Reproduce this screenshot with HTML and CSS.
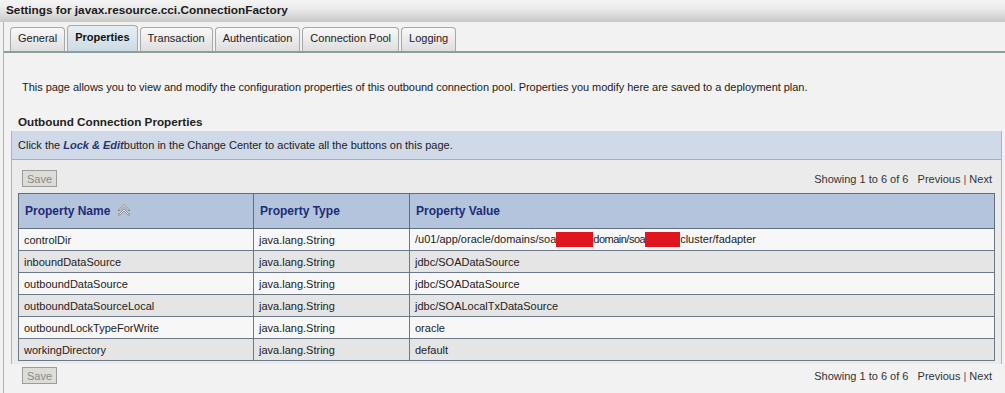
FILE: index.html
```html
<!doctype html>
<html lang="en">
<head>
    <meta charset="UTF-8">
    <title>Settings for javax.resource.cci.ConnectionFactory</title>
    <link rel="stylesheet" href="styles.css">
</head>
<body>
<div class="titlebar">Settings for javax.resource.cci.ConnectionFactory</div>
<div class="frame">
    <div class="tabs">
        <div class="tab">General</div>
        <div class="tab active">Properties</div>
        <div class="tab">Transaction</div>
        <div class="tab">Authentication</div>
        <div class="tab">Connection Pool</div>
        <div class="tab">Logging</div>
    </div>
    <p class="intro">This page allows you to view and modify the configuration properties of this outbound connection pool. Properties you modify here are saved to a deployment plan.</p>
    <h3 class="section">Outbound Connection Properties</h3>
    <div class="panel">
        <div class="notice">Click the <b><i>Lock &amp; Edit</i></b>button in the Change Center to activate all the buttons on this page.</div>
        <div class="controls">
            <button class="save" disabled>Save</button>
            <span class="pager">Showing 1 to 6 of 6 &nbsp; Previous <span class="sep">|</span> Next</span>
        </div>
        <table class="props">
            <tr>
                <th class="c1">Property Name
                    <svg class="sort" width="14" height="12" viewBox="0 0 14 12">
                        <path d="M1 6.5 L7 0.5 L13 6.5 L11 6.5 L7 2.5 L3 6.5 Z" fill="#f2f2f2" stroke="#8c8c8c" stroke-width="1"/>
                        <path d="M1 11 L7 5 L13 11 L11 11 L7 7 L3 11 Z" fill="#f2f2f2" stroke="#8c8c8c" stroke-width="1"/>
                    </svg>
                </th>
                <th class="c2">Property Type</th>
                <th>Property Value</th>
            </tr>
            <tr>
                <td>controlDir</td>
                <td>java.lang.String</td>
                <td>/u01/app/oracle/domains/soa<span class="mask"></span><span class="tight">domain/soa</span><span class="mask m2"></span>cluster/fadapter</td>
            </tr>
            <tr>
                <td>inboundDataSource</td>
                <td>java.lang.String</td>
                <td>jdbc/SOADataSource</td>
            </tr>
            <tr>
                <td>outboundDataSource</td>
                <td>java.lang.String</td>
                <td>jdbc/SOADataSource</td>
            </tr>
            <tr>
                <td>outboundDataSourceLocal</td>
                <td>java.lang.String</td>
                <td>jdbc/SOALocalTxDataSource</td>
            </tr>
            <tr>
                <td>outboundLockTypeForWrite</td>
                <td>java.lang.String</td>
                <td>oracle</td>
            </tr>
            <tr>
                <td>workingDirectory</td>
                <td>java.lang.String</td>
                <td>default</td>
            </tr>
        </table>
        <div class="controls bottom">
            <button class="save" disabled>Save</button>
            <span class="pager">Showing 1 to 6 of 6 &nbsp; Previous <span class="sep">|</span> Next</span>
        </div>
    </div>
</div>
</body>
</html>
```
FILE: styles.css
```css
body{ margin: 0; background: #f2f2f2; font-family: "Liberation Sans", Arial, sans-serif; font-size: 11px; color: #222; }
.titlebar{ height: 22px; line-height: 20px; padding-left: 6px; font-size: 11.8px; font-weight: bold; color: #1b1b1b; background: linear-gradient(#f4f4f4, #ededed 35%, #c7c8c6); }
.frame{ margin-left: 3px; border-left: 1px solid #aab4b6; height: 371px; }
.tabs{ display: flex; align-items: flex-end; gap: 2px; height: 29px; padding-left: 6px; border-bottom: 2px solid #8c9e9c; }
.tab{ height: 23px; line-height: 20px; padding: 0 7px; border: 1px solid #a8a8a8; border-bottom: none; border-radius: 4px 4px 0 0; background: linear-gradient(#f8f8f8, #dedede); color: #222; }
.tab.active{ height: 25px; line-height: 22px; font-weight: bold; background: linear-gradient(#e6eef3, #cddbe4); color: #111; }
.intro{ margin: 28px 0 0 18px; line-height: 13px; letter-spacing: -0.04px; }
.section{ margin: 21px 0 0 14px; font-size: 11.7px; line-height: 13px; font-weight: bold; }
.panel{ margin: 3px 3px 0 7px; border-left: 1px solid #b2b2b2; border-right: 1px solid #b2b2b2; background: #ebebeb; height: 233px; }
.notice{ height: 28px; line-height: 28px; padding-left: 6px; background: #cfd9e8; border-bottom: 1px solid #a9adb2; }
.notice i{ color: #27356e; }
.controls{ display: flex; justify-content: space-between; align-items: center; padding: 10px 9px 0 10px; }
.controls.bottom{ padding-top: 6px; }
.save{ width: 35px; height: 17px; padding: 0; border: 1px solid #9c9c9c; background: #dcdcd8; color: #8a8a8a; font-family: "Liberation Sans", Arial, sans-serif; font-size: 11px; }
.pager{ color: #333; }
.sep{ color: #555; }
.props{ margin: 6px 0 0 6px; width: 977px; border-collapse: collapse; }
.props th{ height: 34px; padding: 0 6px; text-align: left; font-size: 12px; color: #1e2b78; background: #b4c4dc; border: 1px solid #5f6f80; }
.props th.c1{ width: 222px; }
.props th.c2{ width: 143px; }
.props td{ height: 21px; padding: 0 5px; border: 1px solid #6a7887; color: #222; }
.props tr:nth-child(even) td{ background: #f7f7f7; }
.props tr:nth-child(odd) td{ background: #e5e5e5; }
.sort{ vertical-align: -1px; margin-left: 3px; }
.mask{ display: inline-block; width: 37px; height: 15px; background: #e0161f; vertical-align: -4px; }
.mask.m2{ width: 35px; }
.tight{ letter-spacing: -0.5px; }
```
